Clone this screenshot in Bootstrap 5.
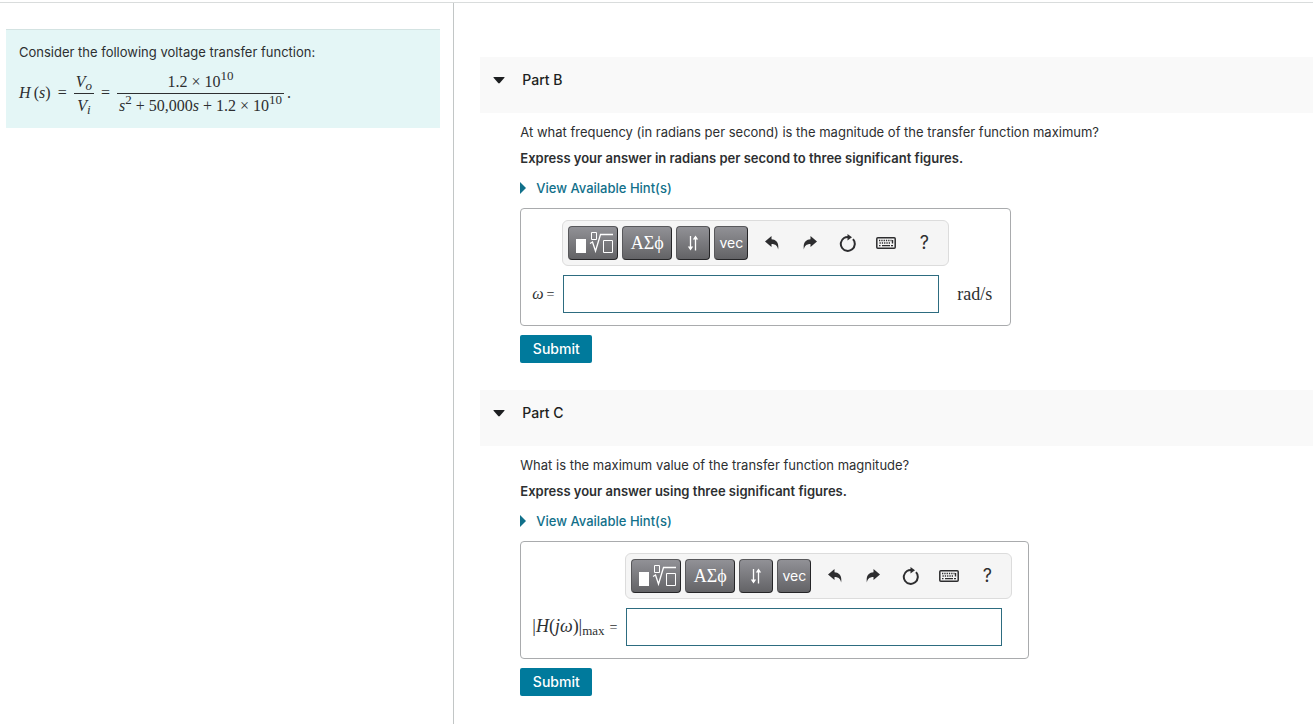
<!DOCTYPE html>
<html lang="en">
<head>
<meta charset="utf-8">
<meta name="viewport" content="width=device-width, initial-scale=1">
<title>Voltage transfer function</title>
<link href="https://cdn.jsdelivr.net/npm/bootstrap@5.3.0/dist/css/bootstrap.min.css" rel="stylesheet">
<style>
  :root { --teal: #007a9c; --teal-dark: #11708a; --ink: #2d2f31; }
  body { font-family: Inter, "Liberation Sans", sans-serif; font-size: 13px; line-height: 20px; color: var(--ink); background: #fff; }
  .page-shell { margin-top: 2px; border-top: 1px solid #d9dcdc; min-height: calc(100vh - 2px); }
  .problem-pane { flex: 0 0 34.6%; border-right: 1px solid #c2c6c6; padding: 26px 13px 0 6px; }
  .problem-box { background: #e4f6f6; border-top: 1px solid #d3e3e2; padding: 12px 13px 11px; }
  .parts-pane { padding: 54px 0 27px 26px; min-width: 0; }
  .part-section + .part-section { margin-top: 27px; }
  .part-head { background: #f9f9f9; padding: 12px 13px 22px; font-size: 14px; line-height: 22px; font-weight: 500; }
  .part-toggle { border: 0; background: none; padding: 0; color: #1d1f21; gap: 17px; font: inherit; }
  .part-body { padding: 9px 16px 0 40px; }
  .hint-link { color: var(--teal-dark); font-weight: 500; gap: 10px; margin: 10px 0; }
  .instruction { font-weight: 600; margin: 6px 0 0; }

  .math { font-family: "Liberation Serif", serif; font-size: 18px; line-height: 22px; white-space: nowrap; }
  .math sup, .math sub { font-size: 13px; line-height: 0; }
  .formula { margin-top: 7px; gap: 7px; height: 48px; font-size: 16px; }
  .fraction { display: inline-flex; flex-direction: column; text-align: center; }
  .fraction > span { padding: 0 2px; height: 23px; line-height: 24px; }
  .fraction > span + span { border-top: 1px solid var(--ink); height: 24px; }
  .formula-end { gap: 3px; }

  .answer-box { display: inline-grid; grid-template-columns: 22px auto 36px; column-gap: 8px; row-gap: 9px; align-items: center; border: 1px solid #a9abad; border-radius: 4px; padding: 11px 17px 12px 11px; }
  .answer-box.no-unit { grid-template-columns: 85px auto; padding-right: 16px; }
  .tool-strip { grid-column: 2; background: #f5f5f5; border: 1px solid #dcdcdc; border-radius: 6px; padding: 5px; gap: 4px; }
  .tool-icons { margin-left: 1px; }
  .key { width: 34px; height: 34px; padding: 0; border: 1px solid #58585b; border-right-color: #252527; border-bottom-color: #252527; border-radius: 4px; background: linear-gradient(#919196, #636366); color: #fff; font-size: 14px; }
  .key-wide { width: 50px; }
  .key-greek { font-family: "Liberation Serif", serif; font-size: 18px; }
  .tool { width: 38px; height: 34px; padding: 0; border: 0; background: none; color: #2d2d2f; font-size: 18px; }
  .key svg, .tool svg { display: block; margin: auto; }
  .answer-input { width: 376px; height: 38px; margin-left: 1px; border: 1px solid #2d6c80; border-radius: 0; padding: 4px 8px; font-size: 16px; }
  .answer-label { grid-column: 1; display: flex; justify-content: space-between; align-items: baseline; }
  .answer-label small { font-size: 14px; }
  .answer-label-short { font-size: 16px; }
  .submit-btn { display: block; width: 72px; height: 28px; margin-top: 9px; padding: 0; border: 0; border-radius: 2px; background: var(--teal); color: #fff; font-size: 14px; line-height: 28px; font-weight: 500; }
  .submit-btn:hover { background: #00657f; color: #fff; }
</style>
</head>
<body>
<svg width="0" height="0" class="position-absolute" aria-hidden="true">
  <symbol id="i-down" viewBox="0 0 12 7"><path d="M1 0h10q1 0 .4.8L6.800 6q-.8.9-1.600 0L.6.8Q0 0 1 0z" fill="currentColor"/></symbol>
  <symbol id="i-right" viewBox="0 0 6 12"><path d="M0 0l6 6-6 6z" fill="currentColor"/></symbol>
  <symbol id="i-root" viewBox="0 0 40 24">
    <path d="M3 8h10v14H3z" fill="#fff"/>
    <g fill="none" stroke="#fff"><path d="M18.500 1.500h5v7h-5z"/><path d="M30.500 9.500h9v12h-9z"/><path d="M17 12.500l2.500-1.500 3 9L27.500 3.500H40" stroke-width="1.300"/></g>
  </symbol>
  <symbol id="i-swap" viewBox="0 0 14 16"><g fill="none" stroke="#fff" stroke-width="1.300"><path d="M4.500 1v13M9.500 15.500V2"/></g><path d="M1.800 11.500h5.400L4.500 15.500zM6.800 4.500h5.400L9.500 .500z" fill="#fff"/></symbol>
  <symbol id="i-undo" viewBox="0 0 14 14"><path d="M0 5.500L6.500 0v3.300c4.500.2 7.800 3.500 6.600 10.200C12.600 9.800 10.700 8 6.500 7.900V11z" fill="currentColor"/></symbol>
  <symbol id="i-reset" viewBox="0 0 18 18"><path d="M14 5.200A7 7 0 1 1 5 4Q6.500 3.100 9 3.100" fill="none" stroke="currentColor" stroke-width="2"/><path d="M8.500 0l4.500 3.300-4.500 3.300z" fill="currentColor"/></symbol>
  <symbol id="i-keys" viewBox="0 0 20 12"><rect x=".8" y=".8" width="18.400" height="10.400" rx="1" fill="none" stroke="currentColor" stroke-width="1.500"/><path d="M3 3.500h12.500M3.500 6h11" stroke="currentColor" stroke-width="1.400" stroke-dasharray="1.300 1"/><path d="M16.500 3v3.500M3 8.600h1.500M6 8.600h8M15 8.600h2" stroke="currentColor" stroke-width="1.400"/></symbol>
</svg>

<div class="page-shell d-flex">
  <aside class="problem-pane">
    <div class="problem-box">
      <p class="m-0">Consider the following voltage transfer function:</p>
      <div class="formula math d-flex align-items-center">
        <span><i>H</i>&thinsp;(<i>s</i>)</span><span>=</span>
        <span class="fraction"><span><i>V</i><sub><i>o</i></sub></span><span><i>V</i><sub><i>i</i></sub></span></span>
        <span>=</span>
        <span class="formula-end d-flex align-items-center"><span class="fraction"><span>1.2 × 10<sup>10</sup></span><span><i>s</i><sup>2</sup> + 50,000<i>s</i> + 1.2 × 10<sup>10</sup></span></span><span>.</span></span>
      </div>
    </div>
  </aside>

  <main class="parts-pane flex-grow-1">
    <section class="part-section">
      <h2 class="part-head m-0"><button class="part-toggle d-flex align-items-center" type="button" aria-expanded="true"><svg width="12" height="7"><use href="#i-down"/></svg>Part B</button></h2>
      <div class="part-body">
        <p class="m-0">At what frequency (in radians per second) is the magnitude of the transfer function maximum?</p>
        <p class="instruction">Express your answer in radians per second to three significant figures.</p>
        <a class="hint-link d-flex align-items-center text-decoration-none" href="#"><svg width="6" height="12"><use href="#i-right"/></svg>View Available Hint(s)</a>
        <div class="answer-box">
          <div class="tool-strip d-flex" role="toolbar" aria-label="Equation tools">
            <button class="key key-wide" type="button" aria-label="Templates"><svg width="40" height="24"><use href="#i-root"/></svg></button>
            <button class="key key-wide key-greek" type="button">ΑΣϕ</button>
            <button class="key" type="button" aria-label="Arrows"><svg width="14" height="16"><use href="#i-swap"/></svg></button>
            <button class="key" type="button">vec</button>
            <div class="tool-icons d-flex">
              <button class="tool" type="button" aria-label="Undo"><svg width="14" height="14"><use href="#i-undo"/></svg></button>
              <button class="tool" type="button" aria-label="Redo"><svg width="14" height="14"><use href="#i-undo" transform="matrix(-1 0 0 1 14 0)"/></svg></button>
              <button class="tool" type="button" aria-label="Reset"><svg width="18" height="18"><use href="#i-reset"/></svg></button>
              <button class="tool" type="button" aria-label="Keyboard shortcuts"><svg width="20" height="12"><use href="#i-keys"/></svg></button>
              <button class="tool" type="button">?</button>
            </div>
          </div>
          <label class="answer-label answer-label-short math" for="answer-b"><i>ω</i><small>=</small></label>
          <input class="answer-input" id="answer-b" type="text">
          <span class="math">rad/s</span>
        </div>
        <button class="submit-btn btn" type="submit">Submit</button>
      </div>
    </section>

    <section class="part-section">
      <h2 class="part-head m-0"><button class="part-toggle d-flex align-items-center" type="button" aria-expanded="true"><svg width="12" height="7"><use href="#i-down"/></svg>Part C</button></h2>
      <div class="part-body">
        <p class="m-0">What is the maximum value of the transfer function magnitude?</p>
        <p class="instruction">Express your answer using three significant figures.</p>
        <a class="hint-link d-flex align-items-center text-decoration-none" href="#"><svg width="6" height="12"><use href="#i-right"/></svg>View Available Hint(s)</a>
        <div class="answer-box no-unit">
          <div class="tool-strip d-flex" role="toolbar" aria-label="Equation tools">
            <button class="key key-wide" type="button" aria-label="Templates"><svg width="40" height="24"><use href="#i-root"/></svg></button>
            <button class="key key-wide key-greek" type="button">ΑΣϕ</button>
            <button class="key" type="button" aria-label="Arrows"><svg width="14" height="16"><use href="#i-swap"/></svg></button>
            <button class="key" type="button">vec</button>
            <div class="tool-icons d-flex">
              <button class="tool" type="button" aria-label="Undo"><svg width="14" height="14"><use href="#i-undo"/></svg></button>
              <button class="tool" type="button" aria-label="Redo"><svg width="14" height="14"><use href="#i-undo" transform="matrix(-1 0 0 1 14 0)"/></svg></button>
              <button class="tool" type="button" aria-label="Reset"><svg width="18" height="18"><use href="#i-reset"/></svg></button>
              <button class="tool" type="button" aria-label="Keyboard shortcuts"><svg width="20" height="12"><use href="#i-keys"/></svg></button>
              <button class="tool" type="button">?</button>
            </div>
          </div>
          <label class="answer-label math" for="answer-c"><span>|<i>H</i>(<i>jω</i>)|<sub>max</sub></span><small>=</small></label>
          <input class="answer-input" id="answer-c" type="text">
        </div>
        <button class="submit-btn btn" type="submit">Submit</button>
      </div>
    </section>
  </main>
</div>
<script src="https://cdn.jsdelivr.net/npm/bootstrap@5.3.0/dist/js/bootstrap.bundle.min.js"></script>
</body>
</html>
